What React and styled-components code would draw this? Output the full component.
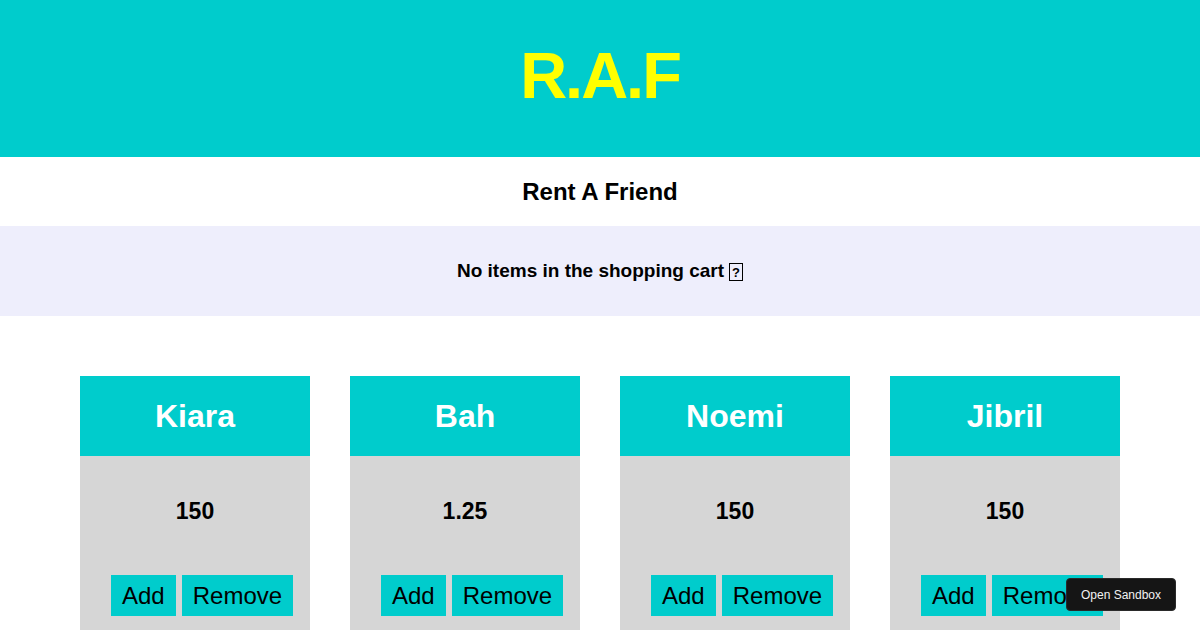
import React from 'react';
import styled, { createGlobalStyle } from 'styled-components';

const friends = [
  { name: 'Kiara', price: '150' },
  { name: 'Bah', price: '1.25' },
  { name: 'Noemi', price: '150' },
  { name: 'Jibril', price: '150' },
];

const GlobalStyle = createGlobalStyle`
  html, body {
    margin: 0;
    padding: 0;
    background: #ffffff;
    font-family: "Liberation Sans", Arial, sans-serif;
  }
`;

const Page = styled.div`
  width: 1200px;
  height: 630px;
  overflow: hidden;
`;

const Header = styled.header`
  height: 157px;
  background: #00cccc;
  display: flex;
  justify-content: center;
  align-items: center;
`;

const Logo = styled.h1`
  margin: 0 0 6px;
  color: #ffff00;
  font-size: 65px;
  font-weight: bold;
  letter-spacing: -2px;
`;

const Subtitle = styled.h2`
  margin: 0;
  height: 69px;
  display: flex;
  justify-content: center;
  align-items: center;
  font-size: 24px;
  color: #000;
`;

const Cart = styled.div`
  height: 90px;
  background: #eeeefc;
  display: flex;
  justify-content: center;
  align-items: center;
  gap: 5px;
  font-size: 19px;
  font-weight: bold;
  color: #000;
`;

// stand-in for the cart emoji that shows as a missing-glyph box
const Tofu = styled.span`
  display: inline-flex;
  justify-content: center;
  align-items: center;
  width: 14px;
  height: 18px;
  margin-top: 2px;
  box-sizing: border-box;
  border: 1.5px solid #000;
  font-size: 13px;
  font-weight: bold;
  line-height: 1;
`;

const Cards = styled.div`
  display: flex;
  justify-content: center;
  gap: 40px;
  padding-top: 60px;
`;

const Card = styled.div`
  width: 230px;
  background: #d6d6d6;
`;

const CardHead = styled.div`
  height: 80px;
  background: #00cccc;
  display: flex;
  justify-content: center;
  align-items: center;
  color: #fff;
  font-size: 32px;
  font-weight: bold;
`;

const Price = styled.div`
  height: 30px;
  margin-top: 40px;
  display: flex;
  justify-content: center;
  align-items: center;
  font-size: 23px;
  font-weight: bold;
`;

const Actions = styled.div`
  display: flex;
  gap: 6px;
  margin-top: 49px;
  padding: 0 16px 20px 31px;
`;

const Button = styled.button`
  height: 41px;
  padding: 0 11px;
  border: none;
  background: #00cccc;
  color: #000;
  font-family: "Liberation Sans", Arial, sans-serif;
  font-size: 24px;
`;

const SandboxBtn = styled.div`
  position: fixed;
  left: 1066px;
  top: 578px;
  width: 110px;
  height: 33px;
  box-sizing: border-box;
  border: 1px solid #2a2a2a;
  border-radius: 4px;
  background: #151515;
  color: #f2f2f2;
  font-size: 12px;
  display: flex;
  justify-content: center;
  align-items: center;
`;

export default function App() {
  return (
    <Page>
      <GlobalStyle />
      <Header>
        <Logo>R.A.F</Logo>
      </Header>
      <Subtitle>Rent A Friend</Subtitle>
      <Cart>
        No items in the shopping cart <Tofu>?</Tofu>
      </Cart>
      <Cards>
        {friends.map((f) => (
          <Card key={f.name}>
            <CardHead>{f.name}</CardHead>
            <Price>{f.price}</Price>
            <Actions>
              <Button>Add</Button>
              <Button>Remove</Button>
            </Actions>
          </Card>
        ))}
      </Cards>
      <SandboxBtn>Open Sandbox</SandboxBtn>
    </Page>
  );
}
